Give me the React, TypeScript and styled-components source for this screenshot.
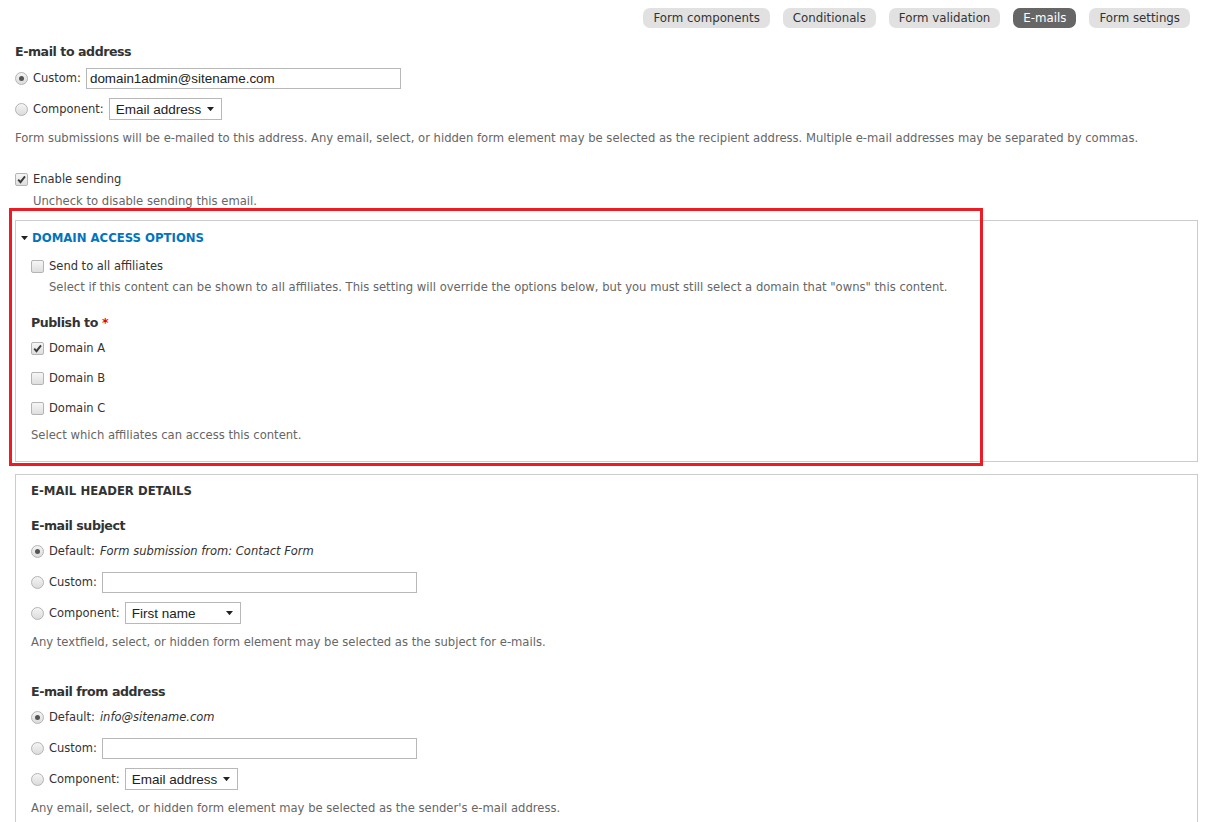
import React, {FC} from 'react';
import styled, {createGlobalStyle} from 'styled-components';

const GlobalStyle = createGlobalStyle`
  html, body {
    margin: 0;
    padding: 0;
    background: #fff;
  }
  body {
    font-family: "DejaVu Sans", "Noto Sans", sans-serif;
    font-size: 12px;
    color: #333;
  }
`;

const Page = styled.div`
  width: 1212px;
  padding: 8px 15px 0 15px;
  box-sizing: border-box;
`;

const TabBar = styled.div`
  display: flex;
  justify-content: flex-end;
  gap: 13px;
  padding-right: 7px;
`;

const Tab = styled.div<{$active?: boolean}>`
  height: 20px;
  line-height: 20px;
  padding: 0 10px;
  border-radius: 7px;
  font-size: 11.8px;
  background: ${p => (p.$active ? '#666' : '#e1e1e1')};
  color: ${p => (p.$active ? '#fff' : '#333')};
`;

const Heading = styled.div<{$top?: number}>`
  font-weight: bold;
  font-size: 12.6px;
  letter-spacing: -0.45px;
  color: #333;
  height: 20px;
  line-height: 20px;
  margin-top: ${p => p.$top ?? 0}px;
`;

const Row = styled.div<{$top?: number; $indent?: number}>`
  display: flex;
  align-items: center;
  height: 22px;
  margin-top: ${p => p.$top ?? 0}px;
  padding-left: ${p => p.$indent ?? 0}px;
  font-size: 11.5px;
  color: #333;
`;

const Label = styled.span`
  margin-left: 5px;
  margin-right: 5px;
  white-space: nowrap;
`;

const Em = styled.em`
  font-style: italic;
  color: #333;
`;

const Radio = styled.span<{$checked?: boolean}>`
  display: inline-block;
  position: relative;
  width: 11px;
  height: 11px;
  border-radius: 50%;
  border: 1px solid #b4b4b4;
  background: linear-gradient(#f4f4f4, #dcdcdc);
  flex-shrink: 0;
  &::after {
    content: '';
    display: ${p => (p.$checked ? 'block' : 'none')};
    position: absolute;
    left: 3px;
    top: 3px;
    width: 5px;
    height: 5px;
    border-radius: 50%;
    background: #555;
  }
`;

const Checkbox = styled.span`
  display: inline-flex;
  align-items: center;
  justify-content: center;
  width: 11px;
  height: 11px;
  border-radius: 2px;
  border: 1px solid #b4b4b4;
  background: linear-gradient(#f6f6f6, #dedede);
  flex-shrink: 0;
`;

const TextInput = styled.div<{$width: number}>`
  width: ${p => p.$width}px;
  height: 21px;
  box-sizing: border-box;
  border: 1px solid #b8b8b8;
  padding: 0 3px;
  line-height: 19px;
  font-family: "Liberation Sans", Arial, sans-serif;
  font-size: 13.4px;
  color: #222;
`;

const Select = styled.div<{$width: number}>`
  width: ${p => p.$width}px;
  height: 22px;
  box-sizing: border-box;
  border: 1px solid #b8b8b8;
  padding: 0 7px 0 6px;
  display: flex;
  align-items: center;
  justify-content: space-between;
  font-family: "Liberation Sans", Arial, sans-serif;
  font-size: 13.5px;
  color: #222;
`;

const Description = styled.div<{$top?: number; $indent?: number}>`
  font-size: 11.6px;
  color: #666;
  height: 18px;
  line-height: 18px;
  margin-top: ${p => p.$top ?? 0}px;
  padding-left: ${p => p.$indent ?? 0}px;
  white-space: nowrap;
`;

const Annotated = styled.div`
  position: relative;
  margin-top: 10px;
`;

const RedFrame = styled.div`
  position: absolute;
  left: -6px;
  top: -12px;
  width: 974px;
  height: 258px;
  box-sizing: border-box;
  border: 3px solid #ed1c24;
  pointer-events: none;
`;

const Fieldset = styled.div<{$top?: number; $height?: number}>`
  border: 1px solid #ccc;
  margin-top: ${p => p.$top ?? 0}px;
  width: 1183px;
  box-sizing: border-box;
  padding: 6px 15px 0 15px;
  height: ${p => (p.$height ? `${p.$height}px` : 'auto')};
`;

const Legend = styled.div<{$link?: boolean}>`
  display: flex;
  align-items: center;
  height: 20px;
  font-weight: bold;
  font-size: 11.7px;
  color: ${p => (p.$link ? '#0074bd' : '#333')};
  margin-left: ${p => (p.$link ? '-10px' : '0')};
  margin-top: ${p => (p.$link ? '1px' : '0')};
`;

const Required = styled.span`
  color: #e00;
  margin-left: 4px;
`;

const Check: FC = () => (
  <svg width="9" height="9" viewBox="0 0 9 9">
    <path d="M1.2 4.6 L3.5 7.2 L8 1.4" fill="none" stroke="#3a3a3a" strokeWidth="1.9" />
  </svg>
);

const Triangle: FC<{size?: number; gap?: number}> = ({size = 7, gap = 0}) => (
  <svg width={size} height={size * 0.6} viewBox="0 0 10 6" style={{marginRight: gap}}>
    <path d="M0 0 L10 0 L5 6 Z" fill="#222" />
  </svg>
);

const RadioRow: FC<{checked?: boolean; label: string; top?: number; indent?: number; children?: React.ReactNode}> = ({
  checked,
  label,
  top,
  indent,
  children,
}) => (
  <Row $top={top} $indent={indent}>
    <Radio $checked={checked} />
    <Label>{label}</Label>
    {children}
  </Row>
);

const CheckRow: FC<{checked?: boolean; label: string; top?: number; indent?: number}> = ({checked, label, top, indent}) => (
  <Row $top={top} $indent={indent}>
    <Checkbox>{checked && <Check />}</Checkbox>
    <Label>{label}</Label>
  </Row>
);

const Dropdown: FC<{width: number; value: string}> = ({width, value}) => (
  <Select $width={width}>
    {value}
    <Triangle size={7} />
  </Select>
);

const App: FC = () => (
  <>
    <GlobalStyle />
    <Page>
      <TabBar>
        <Tab>Form components</Tab>
        <Tab>Conditionals</Tab>
        <Tab>Form validation</Tab>
        <Tab $active>E-mails</Tab>
        <Tab>Form settings</Tab>
      </TabBar>

      <Heading $top={14}>E-mail to address</Heading>
      <RadioRow checked label="Custom:" top={5}>
        <TextInput $width={315}>domain1admin@sitename.com</TextInput>
      </RadioRow>
      <RadioRow label="Component:" top={9}>
        <Dropdown width={113} value="Email address" />
      </RadioRow>
      <Description $top={9}>
        Form submissions will be e-mailed to this address. Any email, select, or hidden form element may be selected as the
        recipient address. Multiple e-mail addresses may be separated by commas.
      </Description>

      <CheckRow checked label="Enable sending" top={21} />
      <Description $top={2} $indent={18}>
        Uncheck to disable sending this email.
      </Description>

      <Annotated>
        <Fieldset $height={242}>
          <Legend $link>
            <Triangle size={7} gap={4} />
            DOMAIN ACCESS OPTIONS
          </Legend>
          <CheckRow label="Send to all affiliates" top={7} />
          <Description $top={1} $indent={18}>
            Select if this content can be shown to all affiliates. This setting will override the options below, but you must
            still select a domain that "owns" this content.
          </Description>
          <Heading $top={17}>
            Publish to<Required>*</Required>
          </Heading>
          <CheckRow checked label="Domain A" top={4} />
          <CheckRow label="Domain B" top={8} />
          <CheckRow label="Domain C" top={8} />
          <Description $top={7}>Select which affiliates can access this content.</Description>
        </Fieldset>
        <RedFrame />
      </Annotated>

      <Fieldset $top={12}>
        <Legend>E-MAIL HEADER DETAILS</Legend>
        <Heading $top={15}>E-mail subject</Heading>
        <RadioRow checked label="Default:" top={4}>
          <Em>Form submission from: Contact Form</Em>
        </RadioRow>
        <RadioRow label="Custom:" top={9}>
          <TextInput $width={315} />
        </RadioRow>
        <RadioRow label="Component:" top={9}>
          <Dropdown width={116} value="First name" />
        </RadioRow>
        <Description $top={9}>Any textfield, select, or hidden form element may be selected as the subject for e-mails.</Description>

        <Heading $top={31}>E-mail from address</Heading>
        <RadioRow checked label="Default:" top={4}>
          <Em>info@sitename.com</Em>
        </RadioRow>
        <RadioRow label="Custom:" top={9}>
          <TextInput $width={315} />
        </RadioRow>
        <RadioRow label="Component:" top={9}>
          <Dropdown width={113} value="Email address" />
        </RadioRow>
        <Description $top={9}>Any email, select, or hidden form element may be selected as the sender's e-mail address.</Description>
        <Description $top={20} />
      </Fieldset>
    </Page>
  </>
);

export default App;
